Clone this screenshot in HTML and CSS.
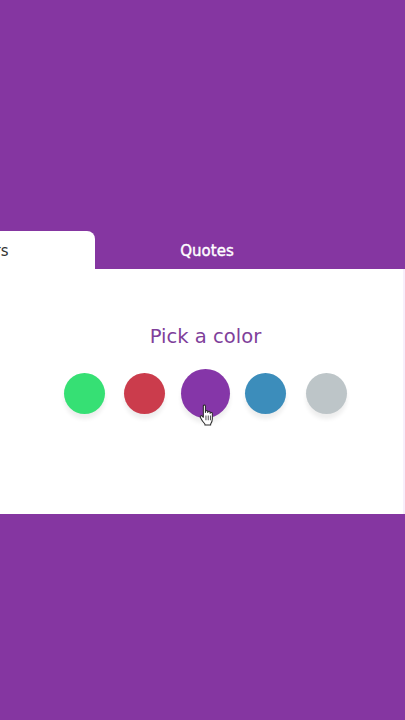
FILE: index.html
```html
<!DOCTYPE html>
<html lang="en">
<head>
    <meta charset="UTF-8">
    <meta name="viewport" content="width=device-width, initial-scale=1.0">
    <title>Color Picker</title>
    <link rel="stylesheet" href="styles.css">
</head>
<body>
    <div class="tabs">
        <div class="tab active">Colors</div>
        <div class="tab">Quotes</div>
    </div>
    <div class="panel">
        <h2 class="panel-title">Pick a color</h2>
        <div class="swatches">
            <div class="swatch green"></div>
            <div class="swatch red"></div>
            <div class="swatch purple">
                <svg class="cursor" width="16" height="22" viewBox="0 0 15 21">
                    <path d="M4 1.800c0-1.200 2-1.200 2 0V8l.3-1.200c.3-1 1.900-.8 1.900.3v1l.3-.6c.4-.9 1.900-.6 1.900.4v1l.3-.4c.5-.8 1.900-.4 1.900.6v5.200c0 2.200-.8 3.500-1.600 4.800v1H5.500v-1C4 17.500 2.500 15.500 1.200 12.800.6 11.500 2 10.500 3 11.500l1 1.200z" fill="#fff" stroke="#2b2b2b" stroke-width="1" stroke-linejoin="round"/>
                    <path d="M6.500 11v4.500M8.700 11v4.500M10.800 11v4.500" fill="none" stroke="#2b2b2b" stroke-width=".8"/>
                </svg>
            </div>
            <div class="swatch blue"></div>
            <div class="swatch grey"></div>
        </div>
    </div>
</body>
</html>
```

FILE: styles.css
```css
/* General Reset */
* {
    margin: 0;
    padding: 0;
    box-sizing: border-box;
}

body {
    font-family: 'DejaVu Sans', sans-serif;
    background: #8536a1;
    height: 720px;
    padding-top: 231px;
    overflow: hidden;
}

/* Tabs */
.tabs {
    display: flex;
    margin-left: -129px;
}

.tab {
    width: 224px;
    height: 38px;
    line-height: 41px;
    text-align: center;
    font-size: 15px;
    color: #fff;
    -webkit-text-stroke: 0.4px #fff;
}

.tab.active {
    background: #fff;
    color: #333;
    -webkit-text-stroke: 0;
    border-radius: 8px 8px 0 0;
    padding-left: 4px;
}

/* Panel */
.panel {
    width: 403px;
    height: 245px;
    background: #fff;
    box-shadow: 2px 0 0 #f8eefb;
    padding-top: 55px;
}

.panel-title {
    font-size: 19.600px;
    font-weight: normal;
    line-height: 25px;
    text-align: center;
    color: #7f3f9b;
    margin-left: 8px;
}

/* Color swatches */
.swatches {
    display: flex;
    justify-content: center;
    gap: 19.500px;
    margin-top: 24px;
    margin-left: 7px;
}

.swatch {
    position: relative;
    width: 41px;
    height: 41px;
    border-radius: 50%;
    box-shadow: 0 5px 4px rgba(0, 0, 0, 0.07);
}

.green { background: #36e074; }
.red { background: #cb3c4c; }
.blue { background: #3c8dbb; }
.grey { background: #bdc5c8; }

.purple {
    background: #8536a8;
    width: 49px;
    height: 49px;
    margin: -4px -4px;
}

.cursor {
    position: absolute;
    left: 18px;
    top: 35px;
}
```
